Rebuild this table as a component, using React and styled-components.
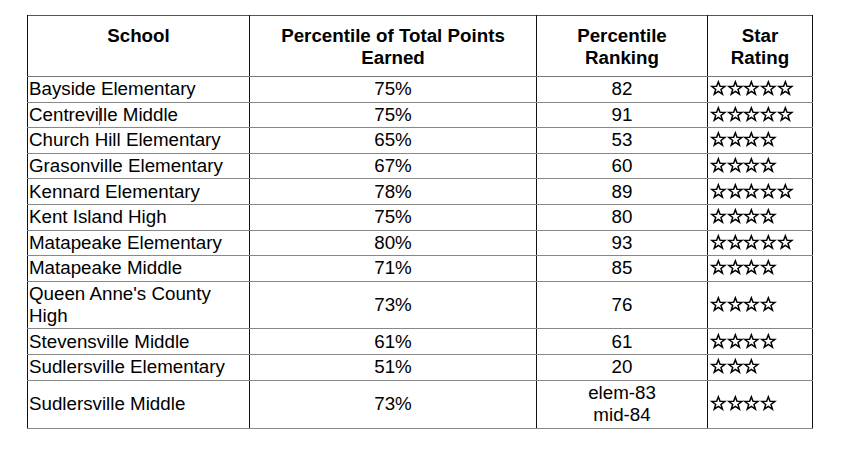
import React from "react";
import styled, { createGlobalStyle } from "styled-components";

const Global = createGlobalStyle`
  html, body { margin: 0; padding: 0; background: #fff; }
  body { font-family: "Liberation Sans", Arial, sans-serif; color: #000; }
`;

const Page = styled.div`
  padding: 15px 0 0 27px;
`;

const Table = styled.table`
  border-collapse: collapse;
  table-layout: fixed;
  width: 785px;
  font-size: 18.75px;
  line-height: 22px;
  border-top: 1px solid #555;
  border-bottom: 1.5px solid #333;
  border-left: 1.5px solid #111;
  border-right: 1.5px solid #111;
`;

const HeadCell = styled.th`
  font-weight: bold;
  text-align: center;
  vertical-align: top;
  padding: 9px 2px 7px;
  border-left: 1px solid #111;
  border-right: 1px solid #111;
  border-bottom: 1px solid #777;
`;

const Cell = styled.td`
  text-align: ${(p) => p.$align || "left"};
  vertical-align: middle;
  padding: 1.3px ${(p) => (p.$align === "center" ? "2px" : "0 1.3px 1px")};
  border-left: 1px solid #111;
  border-right: 1px solid #111;
  border-bottom: 1px solid #888;
`;

const Caret = styled.span`
  display: inline-block;
  width: 1px;
  height: 19px;
  margin-right: -1px;
  background: #6b7b95;
  vertical-align: -4px;
`;

const Stars = styled.div`
  display: flex;
  gap: 2px;
  align-items: center;
  margin-top: -2px;
  padding-left: 2px;
`;

const StarSvg = styled.svg`
  display: block;
  width: 14.7px;
  height: 14.2px;
  overflow: visible;
`;

function Star() {
  return (
    <StarSvg viewBox="0 0 30 29">
      <path
        d="M15 1.8 L18.5 11 L28.3 11 L20.4 17.2 L23.4 27 L15 21.2 L6.6 27 L9.6 17.2 L1.7 11 L11.5 11 Z"
        fill="#fff"
        stroke="#000"
        strokeWidth="3"
        strokeLinejoin="miter"
      />
    </StarSvg>
  );
}

const rows = [
  { name: "Bayside Elementary", pct: "75%", rank: "82", stars: 5 },
  { name: "Centreville Middle", pct: "75%", rank: "91", stars: 5, caret: true },
  { name: "Church Hill Elementary", pct: "65%", rank: "53", stars: 4 },
  { name: "Grasonville Elementary", pct: "67%", rank: "60", stars: 4 },
  { name: "Kennard Elementary", pct: "78%", rank: "89", stars: 5 },
  { name: "Kent Island High", pct: "75%", rank: "80", stars: 4 },
  { name: "Matapeake Elementary", pct: "80%", rank: "93", stars: 5 },
  { name: "Matapeake Middle", pct: "71%", rank: "85", stars: 4 },
  { name: "Queen Anne's County High", pct: "73%", rank: "76", stars: 4 },
  { name: "Stevensville Middle", pct: "61%", rank: "61", stars: 4 },
  { name: "Sudlersville Elementary", pct: "51%", rank: "20", stars: 3 },
  { name: "Sudlersville Middle", pct: "73%", rank: ["elem-83", "mid-84"], stars: 4, tall: true },
];

const Row = styled.tr`
  height: ${(p) => (p.$tall ? "48px" : "auto")};
`;

export default function App() {
  return (
    <>
      <Global />
      <Page>
        <Table>
          <colgroup>
            <col style={{ width: 222 }} />
            <col style={{ width: 287 }} />
            <col style={{ width: 171 }} />
            <col style={{ width: 105 }} />
          </colgroup>
          <thead>
            <tr>
              <HeadCell>School</HeadCell>
              <HeadCell>
                Percentile of Total Points
                <br />
                Earned
              </HeadCell>
              <HeadCell>
                Percentile
                <br />
                Ranking
              </HeadCell>
              <HeadCell>
                Star
                <br />
                Rating
              </HeadCell>
            </tr>
          </thead>
          <tbody>
            {rows.map((r) => (
              <Row key={r.name} $tall={r.tall}>
                <Cell>
                  {r.caret ? (
                    <>
                      Centrevi
                      <Caret />
                      lle Middle
                    </>
                  ) : (
                    r.name
                  )}
                </Cell>
                <Cell $align="center">{r.pct}</Cell>
                <Cell $align="center">
                  {Array.isArray(r.rank) ? (
                    <>
                      {r.rank[0]}
                      <br />
                      {r.rank[1]}
                    </>
                  ) : (
                    r.rank
                  )}
                </Cell>
                <Cell>
                  <Stars>
                    {Array.from({ length: r.stars }).map((_, i) => (
                      <Star key={i} />
                    ))}
                  </Stars>
                </Cell>
              </Row>
            ))}
          </tbody>
        </Table>
      </Page>
    </>
  );
}
